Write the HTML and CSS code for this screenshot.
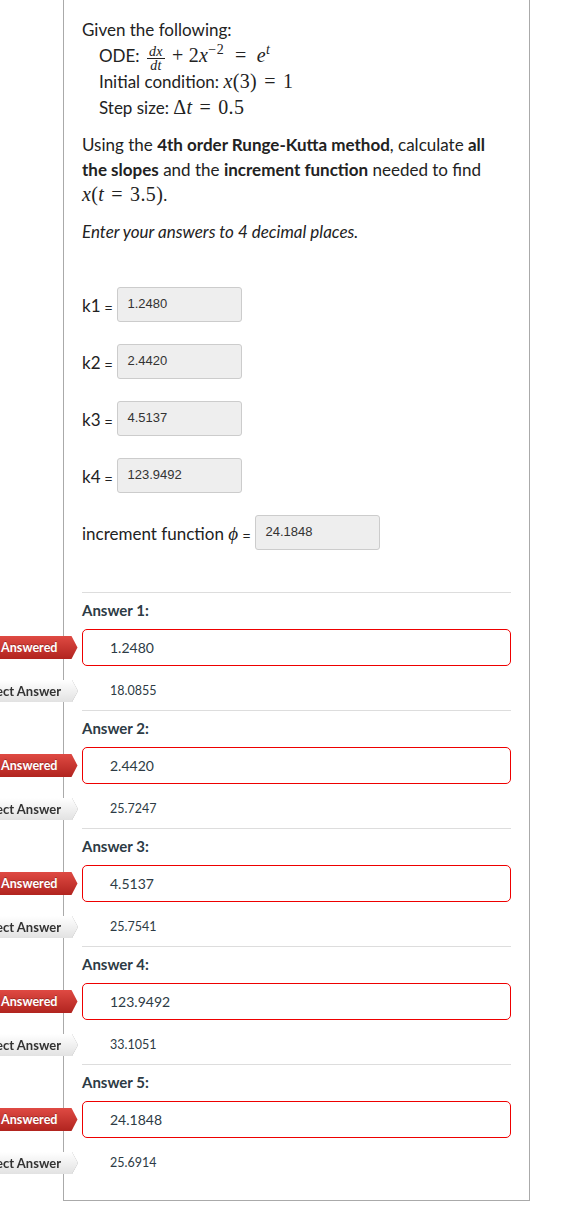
FILE: index.html
```html
<!DOCTYPE html>
<html>
<head>
<meta charset="utf-8">
<link rel="stylesheet" href="styles.css">
</head>
<body>
<div class="quiz">
  <div class="question">
    <p class="given">Given the following:</p>
    <div class="indent">
      <div class="line">ODE: <span class="math"><span class="frac"><span class="num"><i>dx</i></span><span class="den"><i>dt</i></span></span><span class="bin">+</span>2<i>x</i><sup>−2</sup><span class="rel wide">=</span><i>e</i><sup><i>t</i></sup></span></div>
      <div class="line">Initial condition: <span class="math"><i>x</i>(3)<span class="rel">=</span>1</span></div>
      <div class="line">Step size: <span class="math">Δ<i>t</i><span class="rel">=</span>0.5</span></div>
    </div>
    <p class="task">Using the <b>4th order Runge-Kutta method</b>, calculate <b>all the slopes</b> and the <b>increment function</b> needed to find <span class="math"><i>x</i>(<i>t</i><span class="rel">=</span>3.5)</span>.</p>
    <p class="note">Enter your answers to 4 decimal places.</p>
    <div class="kgroup">
      <div class="krow"><span class="klabel">k1 <span class="eq">=</span></span><div class="kbox">1.2480</div></div>
      <div class="krow"><span class="klabel">k2 <span class="eq">=</span></span><div class="kbox">2.4420</div></div>
      <div class="krow"><span class="klabel">k3 <span class="eq">=</span></span><div class="kbox">4.5137</div></div>
      <div class="krow"><span class="klabel">k4 <span class="eq">=</span></span><div class="kbox">123.9492</div></div>
      <div class="krow"><span class="klabel">increment function <span class="math phi"><i>ϕ</i></span> <span class="eq">=</span></span><div class="kbox">24.1848</div></div>
    </div>
  </div>
  <div class="answers">
    <div class="ans">
      <div class="ans-label">Answer 1:</div>
      <div class="ans-box"><span class="tag tag-red"><span>Answered</span></span>1.2480</div>
      <div class="ans-correct"><span class="tag tag-gray"><span>Correct Answer</span></span>18.0855</div>
    </div>
    <div class="ans">
      <div class="ans-label">Answer 2:</div>
      <div class="ans-box"><span class="tag tag-red"><span>Answered</span></span>2.4420</div>
      <div class="ans-correct"><span class="tag tag-gray"><span>Correct Answer</span></span>25.7247</div>
    </div>
    <div class="ans">
      <div class="ans-label">Answer 3:</div>
      <div class="ans-box"><span class="tag tag-red"><span>Answered</span></span>4.5137</div>
      <div class="ans-correct"><span class="tag tag-gray"><span>Correct Answer</span></span>25.7541</div>
    </div>
    <div class="ans">
      <div class="ans-label">Answer 4:</div>
      <div class="ans-box"><span class="tag tag-red"><span>Answered</span></span>123.9492</div>
      <div class="ans-correct"><span class="tag tag-gray"><span>Correct Answer</span></span>33.1051</div>
    </div>
    <div class="ans">
      <div class="ans-label">Answer 5:</div>
      <div class="ans-box"><span class="tag tag-red"><span>Answered</span></span>24.1848</div>
      <div class="ans-correct"><span class="tag tag-gray"><span>Correct Answer</span></span>25.6914</div>
    </div>
  </div>
</div>
</body>
</html>
```
FILE: styles.css
```css
html, body {
  margin: 0;
  padding: 0;
  background: #fff;
}
body {
  font-family: Lato, "Noto Sans", sans-serif;
  color: #222;
  overflow: hidden;
}
.quiz {
  margin-left: 63px;
  width: 467px;
  box-sizing: border-box;
  border: 1px solid #aaa;
  border-top: none;
  padding: 17px 18px 18px;
}
.given {
  margin: 0;
  font-size: 17px;
  line-height: 26px;
}
.indent {
  padding-left: 17px;
  font-size: 17px;
}
.line {
  line-height: 26px;
  height: 26px;
}
.math {
  font-family: "Liberation Serif", "DejaVu Serif", serif;
  font-size: 20px;
  line-height: 1;
  letter-spacing: 0.4px;
}
.math i {
  font-style: italic;
}
.math sup {
  font-size: 14px;
  vertical-align: 8px;
  line-height: 1;
}
.frac {
  display: inline-flex;
  flex-direction: column;
  align-items: center;
  vertical-align: 6px;
  font-size: 14px;
  line-height: 10px;
  margin: 0 2px 0 3px;
}
.frac .num {
  border-bottom: 1px solid #222;
  padding: 0 2px 1px;
}
.frac .den {
  padding-top: 2px;
}
.bin {
  margin: 0 5px;
}
.rel {
  margin: 0 7px;
}
.rel.wide {
  margin: 0 10px 0 11px;
}
.task {
  margin: 11px 0 0;
  font-size: 17px;
  line-height: 25px;
}
.task b {
  font-weight: bold;
}
.note {
  margin: 12px 0 0;
  font-size: 17px;
  line-height: 25px;
  font-style: italic;
}
.kgroup {
  margin-top: 43px;
  display: flex;
  flex-direction: column;
  gap: 22px;
}
.krow {
  display: flex;
  align-items: flex-end;
}
.klabel {
  font-size: 17px;
  line-height: 20px;
  padding-bottom: 4px;
  margin-right: 5px;
  white-space: nowrap;
}
.klabel .eq {
  font-family: "Liberation Sans", Arial, sans-serif;
  font-size: 13px;
}
.phi {
  font-size: 19px;
}
.kbox {
  width: 125px;
  height: 35px;
  box-sizing: border-box;
  background: #eeeeee;
  border: 1px solid #cccccc;
  border-radius: 3px;
  padding: 8px 9px 0;
  font-family: "Liberation Sans", Arial, sans-serif;
  font-size: 13px;
  line-height: 15px;
  color: #333;
}
.answers {
  margin-top: 42px;
}
.ans {
  border-top: 1px solid #dddddd;
}
.ans-label {
  padding-top: 7px;
  margin-bottom: 9px;
  font-size: 15px;
  line-height: 20px;
  font-weight: bold;
  color: #2d3b45;
}
.ans-box {
  position: relative;
  height: 37px;
  box-sizing: border-box;
  border: 1.5px solid #ee0000;
  border-radius: 5px;
  padding-left: 27px;
  display: flex;
  align-items: center;
  font-size: 14px;
  color: #2d3b45;
}
.ans-correct {
  position: relative;
  padding: 14px 0 8px 28px;
  line-height: 22px;
  font-size: 12.5px;
  color: #2d3b45;
}
.tag {
  position: absolute;
  right: calc(100% + 4px);
  width: 120px;
  font-family: Lato, sans-serif;
  font-size: 13px;
  font-weight: bold;
}
.tag > span {
  display: block;
  height: 100%;
  box-sizing: border-box;
  text-align: right;
  clip-path: polygon(0 0, calc(100% - 6px) 0, 100% 50%, calc(100% - 6px) 100%, 0 100%);
}
.tag-red {
  top: 50%;
  height: 23px;
  margin-top: -11.5px;
  font-size: 12.6px;
}
.ans-box .tag-red {
  right: calc(100% + 5.5px);
}
.tag-red > span {
  line-height: 23px;
  padding-right: 20px;
  color: #fff;
  background: linear-gradient(#df4a43, #b1241f);
  text-shadow: 0 -1px 0 rgba(0,0,0,0.25);
}
.tag-gray {
  top: 14px;
  height: 22px;
  filter: drop-shadow(0 0 0.6px #999);
}
.tag-gray > span {
  line-height: 22px;
  padding-right: 17px;
  color: #333;
  background: linear-gradient(#ffffff, #e2e2e2);
}
```
